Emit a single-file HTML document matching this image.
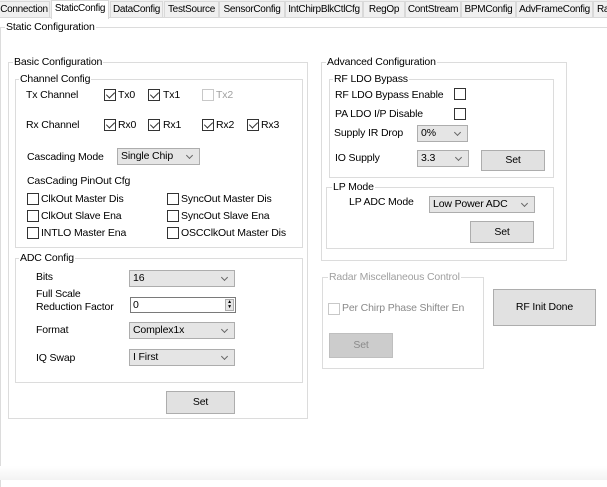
<!DOCTYPE html>
<html><head><meta charset="utf-8"><style>
*{box-sizing:border-box;margin:0;padding:0}
body{width:607px;height:480px;background:#fff;position:relative;overflow:hidden;font-family:"Liberation Sans",Arial,sans-serif;font-size:10.5px;color:#000;letter-spacing:-0.15px}
.a{position:absolute;white-space:nowrap;line-height:14px}
.g{position:absolute;border:1px solid #dcdcdc}
.gt{position:absolute;background:#fff;padding:0 1px;line-height:14px;white-space:nowrap}
.cb{position:absolute;width:12px;height:12px;border:1px solid #333;background:#fff}
.cb.c::after{content:"";position:absolute;left:3px;top:0px;width:4px;height:7px;border:solid #333;border-width:0 1.3px 1.3px 0;transform:rotate(45deg)}
.cb.d{border-color:#c8c8c8}
.cmb{position:absolute;height:17px;background:#e5e5e5;border:1px solid #adadad;padding-left:3px;line-height:15px}
.cmb::after{content:"";position:absolute;right:7px;top:4px;width:4px;height:4px;border:solid #666;border-width:0 1px 1px 0;transform:rotate(45deg)}
.btn{position:absolute;background:#e1e1e1;border:1px solid #adadad;text-align:center}
.tab{position:absolute;top:1px;height:17px;background:#f0f0f0;border:1px solid #d9d9d9;line-height:15px;text-align:center;font-size:10px;letter-spacing:-0.3px;overflow:hidden;white-space:nowrap}
</style></head><body>
<div style="position:absolute;left:0;top:0;width:607px;height:18px;background:#f0f0f0;border-bottom:1px solid #d9d9d9"></div>
<div class="tab" style="left:-2px;width:52px">Connection</div>
<div class="tab" style="left:51px;top:0;height:19px;width:58px;background:#fff;border-bottom:none">StaticConfig</div>
<div class="tab" style="left:110px;width:53px">DataConfig</div>
<div class="tab" style="left:164px;width:55px">TestSource</div>
<div class="tab" style="left:219px;width:66px">SensorConfig</div>
<div class="tab" style="left:285px;width:78px">IntChirpBlkCtlCfg</div>
<div class="tab" style="left:363px;width:42px">RegOp</div>
<div class="tab" style="left:405px;width:56px">ContStream</div>
<div class="tab" style="left:461px;width:55px">BPMConfig</div>
<div class="tab" style="left:516px;width:77px">AdvFrameConfig</div>
<div class="tab" style="left:593px;width:30px;text-align:left;padding-left:3px">Ra</div>

<div class="g" style="left:0px;top:27px;width:620px;height:460px;border-right:none;border-bottom:none"></div>
<div class="gt" style="left:5px;top:20px">Static Configuration</div>

<!-- Basic -->
<div class="g" style="left:8px;top:62px;width:300px;height:357px"></div>
<div class="gt" style="left:13px;top:55px">Basic Configuration</div>
<div class="g" style="left:15px;top:79px;width:288px;height:169px"></div>
<div class="gt" style="left:19px;top:72px">Channel Config</div>
<div class="a" style="left:26px;top:88px">Tx Channel</div>
<div class="cb c" style="left:104px;top:89px"></div><div class="a" style="left:118px;top:88px">Tx0</div>
<div class="cb c" style="left:148px;top:89px"></div><div class="a" style="left:163px;top:88px">Tx1</div>
<div class="cb d" style="left:202px;top:89px"></div><div class="a" style="left:216px;top:88px;color:#a0a0a0">Tx2</div>
<div class="a" style="left:26px;top:118px">Rx Channel</div>
<div class="cb c" style="left:104px;top:119px"></div><div class="a" style="left:118px;top:118px">Rx0</div>
<div class="cb c" style="left:148px;top:119px"></div><div class="a" style="left:163px;top:118px">Rx1</div>
<div class="cb c" style="left:202px;top:119px"></div><div class="a" style="left:216px;top:118px">Rx2</div>
<div class="cb c" style="left:247px;top:119px"></div><div class="a" style="left:261px;top:118px">Rx3</div>
<div class="a" style="left:27px;top:150px">Cascading Mode</div>
<div class="cmb" style="left:117px;top:148px;width:83px">Single Chip</div>
<div class="a" style="left:27px;top:174px">CasCading PinOut Cfg</div>
<div class="cb" style="left:27px;top:193px"></div><div class="a" style="left:41px;top:192px">ClkOut Master Dis</div>
<div class="cb" style="left:27px;top:210px"></div><div class="a" style="left:41px;top:209px">ClkOut Slave Ena</div>
<div class="cb" style="left:27px;top:227px"></div><div class="a" style="left:41px;top:226px">INTLO Master Ena</div>
<div class="cb" style="left:167px;top:193px"></div><div class="a" style="left:181px;top:192px">SyncOut Master Dis</div>
<div class="cb" style="left:167px;top:210px"></div><div class="a" style="left:181px;top:209px">SyncOut Slave Ena</div>
<div class="cb" style="left:167px;top:227px"></div><div class="a" style="left:181px;top:226px">OSCClkOut Master Dis</div>

<div class="g" style="left:15px;top:258px;width:288px;height:125px"></div>
<div class="gt" style="left:19px;top:251px">ADC Config</div>
<div class="a" style="left:36px;top:270px">Bits</div>
<div class="cmb" style="left:129px;top:270px;width:106px">16</div>
<div class="a" style="left:36px;top:288px;line-height:13px">Full Scale<br>Reduction Factor</div>
<div style="position:absolute;left:130px;top:297px;width:106px;height:16px;border:1px solid #7a7a7a;background:#fff;padding-left:2px;line-height:14px">0</div>
<div style="position:absolute;left:225px;top:299px;width:9px;height:12px;background:#e5e5e5;border:1px solid #adadad;font-size:5px;line-height:5px;text-align:center">▲<br>▼</div>
<div class="a" style="left:36px;top:323px">Format</div>
<div class="cmb" style="left:129px;top:322px;width:106px">Complex1x</div>
<div class="a" style="left:36px;top:351px">IQ Swap</div>
<div class="cmb" style="left:129px;top:349px;width:106px">I First</div>
<div class="btn" style="left:166px;top:391px;width:69px;height:23px;line-height:21px">Set</div>

<!-- Advanced -->
<div class="g" style="left:321px;top:62px;width:246px;height:199px"></div>
<div class="gt" style="left:326px;top:55px">Advanced Configuration</div>
<div class="g" style="left:329px;top:79px;width:225px;height:99px"></div>
<div class="gt" style="left:333px;top:72px">RF LDO Bypass</div>
<div class="a" style="left:335px;top:88px">RF LDO Bypass Enable</div>
<div class="cb" style="left:454px;top:88px"></div>
<div class="a" style="left:335px;top:107px">PA LDO I/P Disable</div>
<div class="cb" style="left:454px;top:108px"></div>
<div class="a" style="left:334px;top:126px">Supply IR Drop</div>
<div class="cmb" style="left:417px;top:125px;width:51px">0%</div>
<div class="a" style="left:335px;top:151px">IO Supply</div>
<div class="cmb" style="left:417px;top:150px;width:52px">3.3</div>
<div class="btn" style="left:481px;top:150px;width:64px;height:21px;line-height:19px">Set</div>
<div class="g" style="left:326px;top:187px;width:228px;height:62px"></div>
<div class="gt" style="left:332px;top:180px">LP Mode</div>
<div class="a" style="left:349px;top:195px">LP ADC Mode</div>
<div class="cmb" style="left:429px;top:196px;width:106px">Low Power ADC</div>
<div class="btn" style="left:470px;top:221px;width:64px;height:22px;line-height:20px">Set</div>

<div class="g" style="left:322px;top:277px;width:162px;height:92px"></div>
<div class="gt" style="left:328px;top:270px;color:#a0a0a0">Radar Miscellaneous Control</div>
<div class="cb d" style="left:328px;top:303px"></div>
<div class="a" style="left:342px;top:301px;color:#8a8a8a">Per Chirp Phase Shifter En</div>
<div class="btn" style="left:329px;top:333px;width:64px;height:25px;line-height:23px;background:#cccccc;border-color:#bfbfbf;color:#8a8a8a">Set</div>
<div class="btn" style="left:493px;top:289px;width:103px;height:37px;line-height:35px">RF Init Done</div>

<div style="position:absolute;left:0;top:466px;width:607px;height:14px;background:linear-gradient(#fff,#f3f3f3)"></div>
</body></html>
